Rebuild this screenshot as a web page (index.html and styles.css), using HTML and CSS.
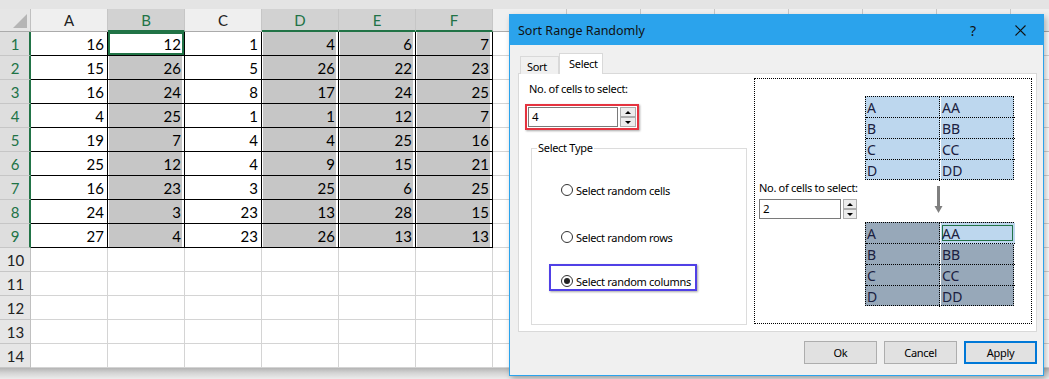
FILE: index.html
```html
<!DOCTYPE html>
<html>
<head>
<meta charset="utf-8">
<title>Sort Range Randomly</title>
<link rel="stylesheet" href="styles.css">
</head>
<body>
<div class="screen">
  <div class="topstrip"></div>
  <div class="sheet">
    <div class="corner"></div>
    <div class="ch">A</div><div class="ch sel">B</div><div class="ch">C</div><div class="ch sel">D</div><div class="ch sel">E</div><div class="ch sel">F</div><div class="ch fillh"></div>

    <div class="rh s">1</div><div class="c">16</div><div class="c g act">12</div><div class="c">1</div><div class="c g">4</div><div class="c g">6</div><div class="c g">7</div><div class="fill"></div>
    <div class="rh s">2</div><div class="c">15</div><div class="c g">26</div><div class="c">5</div><div class="c g">26</div><div class="c g">22</div><div class="c g">23</div><div class="fill"></div>
    <div class="rh s">3</div><div class="c">16</div><div class="c g">24</div><div class="c">8</div><div class="c g">17</div><div class="c g">24</div><div class="c g">25</div><div class="fill"></div>
    <div class="rh s">4</div><div class="c">4</div><div class="c g">25</div><div class="c">1</div><div class="c g">1</div><div class="c g">12</div><div class="c g">7</div><div class="fill"></div>
    <div class="rh s">5</div><div class="c">19</div><div class="c g">7</div><div class="c">4</div><div class="c g">4</div><div class="c g">25</div><div class="c g">16</div><div class="fill"></div>
    <div class="rh s">6</div><div class="c">25</div><div class="c g">12</div><div class="c">4</div><div class="c g">9</div><div class="c g">15</div><div class="c g">21</div><div class="fill"></div>
    <div class="rh s">7</div><div class="c">16</div><div class="c g">23</div><div class="c">3</div><div class="c g">25</div><div class="c g">6</div><div class="c g">25</div><div class="fill"></div>
    <div class="rh s">8</div><div class="c">24</div><div class="c g">3</div><div class="c">23</div><div class="c g">13</div><div class="c g">28</div><div class="c g">15</div><div class="fill"></div>
    <div class="rh s">9</div><div class="c">27</div><div class="c g">4</div><div class="c">23</div><div class="c g">26</div><div class="c g">13</div><div class="c g">13</div><div class="fill"></div>

    <div class="rh">10</div><div class="e"></div><div class="e"></div><div class="e"></div><div class="e"></div><div class="e"></div><div class="e"></div><div class="fill"></div>
    <div class="rh">11</div><div class="e"></div><div class="e"></div><div class="e"></div><div class="e"></div><div class="e"></div><div class="e"></div><div class="fill"></div>
    <div class="rh">12</div><div class="e"></div><div class="e"></div><div class="e"></div><div class="e"></div><div class="e"></div><div class="e"></div><div class="fill"></div>
    <div class="rh">13</div><div class="e"></div><div class="e"></div><div class="e"></div><div class="e"></div><div class="e"></div><div class="e"></div><div class="fill"></div>
    <div class="rh">14</div><div class="e"></div><div class="e"></div><div class="e"></div><div class="e"></div><div class="e"></div><div class="e"></div><div class="fill"></div>
  </div>
  <div class="bottomshade"></div>

  <div class="dialog">
    <div class="titlebar">
      <span class="title">Sort Range Randomly</span>
      <span class="tbtn help">?</span>
      <span class="tbtn close">
        <svg width="11" height="11" viewBox="0 0 11 11"><path d="M0.5 0.5 L10.5 10.5 M10.5 0.5 L0.5 10.5" stroke="#111" stroke-width="1.1" fill="none"/></svg>
      </span>
    </div>
    <div class="dbody">
      <div class="tabs">
        <div class="tab">Sort</div>
        <div class="tab active">Select</div>
      </div>
      <div class="panel">
        <div class="leftcol">
          <div class="lbl">No. of cells to select:</div>
          <div class="redbox">
            <div class="inp">4</div>
            <div class="spin"><span class="sb up"></span><span class="sb dn"></span></div>
          </div>
          <fieldset class="group">
            <legend>Select Type</legend>
            <div class="opt first"><span class="radio"></span><span>Select random cells</span></div>
            <div class="opt second"><span class="radio"></span><span>Select random rows</span></div>
            <div class="focusbox"><div class="opt"><span class="radio on"></span><span>Select random columns</span></div></div>
          </fieldset>
        </div>
        <div class="preview">
          <div class="ptable t1">
            <div class="pc">A</div><div class="pc">AA</div>
            <div class="pc">B</div><div class="pc">BB</div>
            <div class="pc">C</div><div class="pc">CC</div>
            <div class="pc">D</div><div class="pc">DD</div>
          </div>
          <div class="pctrl">
            <div class="plbl">No. of cells to select:</div>
            <div class="prow">
              <div class="pinp">2</div>
              <div class="pspin"><span class="sb up"></span><span class="sb dn"></span></div>
            </div>
          </div>
          <div class="parrow">
            <svg width="149" height="42" viewBox="0 0 149 42"><rect x="72" y="6" width="3" height="21" fill="#7f7f7f"/><path d="M69.5 26 L77.5 26 L73.5 33 Z" fill="#7f7f7f"/></svg>
          </div>
          <div class="ptable t2">
            <div class="pc">A</div><div class="pc hl">AA</div>
            <div class="pc">B</div><div class="pc">BB</div>
            <div class="pc">C</div><div class="pc">CC</div>
            <div class="pc">D</div><div class="pc">DD</div>
          </div>
        </div>
      </div>
      <div class="buttons">
        <div class="btn">Ok</div>
        <div class="btn">Cancel</div>
        <div class="btn primary">Apply</div>
      </div>
    </div>
  </div>
</div>
</body>
</html>
```
FILE: styles.css
```css
* { box-sizing: border-box; margin: 0; padding: 0; }
html, body { width: 1049px; height: 379px; overflow: hidden; background: #fff; }
.screen { position: relative; width: 1049px; height: 379px; overflow: hidden; background: #fff; }

.topstrip { height: 9px; background: #e4e4e4; }

.sheet {
  display: grid;
  grid-template-columns: 31px repeat(6, 77px) 1fr;
  grid-template-rows: 23px repeat(14, 24px);
  font-family: Lato, "Liberation Sans", sans-serif;
  font-size: 15px;
  color: #000;
}
.corner { position: relative; background: #e6e6e6; border-right: 1px solid #c0c0c0; border-bottom: 1px solid #ababab; }
.corner::after {
  content: ""; position: absolute; right: 3px; bottom: 3px; width: 14px; height: 14px;
  background: #b5b5b5; clip-path: polygon(100% 0, 100% 100%, 0 100%);
}
.ch { background: #efefef; border-right: 1px solid #c6c6c6; border-bottom: 1px solid #ababab; display: flex; align-items: center; justify-content: center; color: #222; }
.ch.sel { background: #d2d2d2; color: #217346; border-bottom: 2px solid #217346; }
.ch.fillh { background: repeating-linear-gradient(to right, #efefef 0 73px, #c6c6c6 73px 74px); border-right: none; }
.rh { background: #e6e6e6; border-right: 1px solid #c0c0c0; border-bottom: 1px solid #c6c6c6; display: flex; align-items: center; justify-content: center; color: #222; padding-left: 1px; }
.rh.s { background: #dedede; color: #217346; border-right: 2px solid #217346; }
.c { border-right: 1px solid #000; border-bottom: 1px solid #000; display: flex; align-items: center; justify-content: flex-end; padding-right: 3px; }
.c.g { background: #c6c6c6; box-shadow: inset 1px 0 #fff, inset -2px 0 #fff; }
.c.act { background: #fff; box-shadow: inset 0 0 0 2px #217346; }
.e { border-right: 1px solid #d4d4d4; border-bottom: 1px solid #d4d4d4; }
.fill { border-bottom: 1px solid #d4d4d4; background: repeating-linear-gradient(to right, #fff 0 73px, #d4d4d4 73px 74px); }
.bottomshade { height: 11px; background: linear-gradient(to bottom, #b4b4b4, #d4d4d4 45%, #ececec); }

/* dialog */
.dialog {
  position: absolute; left: 509px; top: 14px; width: 535px; height: 362px;
  border: 1px solid #2ba3ec; background: #f0f0f0;
  font-family: "Noto Sans", sans-serif; font-size: 11px; letter-spacing: -0.3px; color: #000;
  display: flex; flex-direction: column;
  box-shadow: 2px 3px 6px rgba(0,0,0,0.28);
  white-space: nowrap;
}
.titlebar { height: 30px; background: #2ba3ec; display: flex; align-items: center; padding-left: 8px; font-size: 12.5px; letter-spacing: 0; color: #111; }
.title { flex: 1; }
.tbtn { width: 46px; height: 30px; display: flex; align-items: center; justify-content: center; }
.help { font-size: 14px; margin-right: 1px; }

.dbody { flex: 1; padding: 8px 6px 0 8px; display: flex; flex-direction: column; }
.tabs { display: flex; align-items: flex-end; height: 21px; margin-left: 2px; margin-bottom: -1px; position: relative; z-index: 1; }
.tab { height: 18px; width: 39px; border: 1px solid #d9d9d9; border-bottom: none; background: #f0f0f0; padding: 3px 0 0 6px; line-height: 13px; }
.tab.active { height: 21px; width: 44px; background: #fff; padding: 3px 0 0 9px; }

.panel { height: 259px; border: 1px solid #d9d9d9; background: #fff; display: flex; padding-top: 4px; }
.leftcol { width: 235px; display: flex; flex-direction: column; align-items: flex-start; }
.lbl { margin: 4px 0 0 10px; line-height: 14px; }
.redbox {
  margin: 8px 0 0 6px; width: 114px; height: 26px; padding: 1px;
  border: 2px solid #e5333f; box-shadow: 1px 1px 2px rgba(0,0,0,0.35);
  display: flex; gap: 2px;
}
.inp { width: 90px; height: 20px; border: 1px solid #7a7a7a; background: #fff; padding-left: 3px; line-height: 18px; font-size: 11.5px; }
.spin, .pspin { display: flex; flex-direction: column; }
.spin { width: 16px; }
.pspin { width: 14px; }
.sb { flex: 1; height: 10px; background: #ececec; border: 1px solid #adadad; display: flex; align-items: center; justify-content: center; }
.sb::before { content: ""; width: 0; height: 0; border-left: 3px solid transparent; border-right: 3px solid transparent; }
.sb.up::before { border-bottom: 3px solid #000; }
.sb.dn::before { border-top: 3px solid #000; }

.group {
  margin: 11px 0 0 12px; width: 216px; height: 184px;
  border: 1px solid #dcdcdc; padding: 0;
}
.group legend { margin-left: 5px; padding: 0 1px; line-height: 14px; }
.opt { display: flex; align-items: center; height: 16px; gap: 3px; }
.opt.first { margin: 27px 0 0 29px; }
.opt.second { margin: 31px 0 0 29px; }
.focusbox {
  margin: 19px 0 0 17px; width: 148px; height: 27px;
  border: 2px solid #5040e6; box-shadow: 1px 1px 2px rgba(0,0,0,0.35);
  padding: 7px 0 0 10px;
}
.radio { flex: none; width: 12px; height: 12px; border-radius: 50%; border: 1px solid #333; background: #fff; display: flex; align-items: center; justify-content: center; }
.radio.on::before { content: ""; width: 6px; height: 6px; border-radius: 50%; background: #222; }

.preview {
  width: 278px; height: 246px; border: 1px dotted #000;
  display: grid; grid-template-columns: 110px 149px; grid-template-rows: 84px 42px 84px;
  padding-top: 17px;
}
.ptable { grid-column: 2; display: grid; grid-template-columns: 74px 75px; grid-template-rows: repeat(4, 21px); border: 1px dotted #000; font-size: 14px; letter-spacing: 0; color: #1b2040; }
.t1 { grid-row: 1; background: #bdd7ee; }
.t2 { grid-row: 3; background: #97a8b9; }
.pc { border-bottom: 1px dotted #000; padding: 2px 0 0 1px; line-height: 17px; }
.pc:nth-child(odd) { border-right: 1px dotted #000; }
.pc:nth-child(even) { box-shadow: inset 1px 0 #fff; padding-left: 2px; }
.pc:nth-last-child(-n+2) { border-bottom: none; }
.pc.hl { background: #bdd7ee; box-shadow: inset 1px 0 #fff, inset 0 0 0 2px #bdd7ee, inset 0 0 0 3px #217346; }
.pctrl { grid-column: 1; grid-row: 2; padding-left: 4px; }
.plbl { margin-top: 1px; line-height: 14px; white-space: nowrap; }
.prow { display: flex; gap: 2px; margin-top: 4px; height: 20px; }
.pinp { width: 82px; height: 20px; border: 1px solid #7a7a7a; background: #fff; padding-left: 3px; line-height: 18px; font-size: 11.5px; }
.parrow { grid-column: 2; grid-row: 2; }
.parrow svg { display: block; }

.buttons { display: flex; justify-content: flex-end; gap: 7px; margin-top: 9px; }
.btn { width: 73px; height: 23px; background: #e1e1e1; border: 1px solid #adadad; display: flex; align-items: center; justify-content: center; }
.btn.primary { border: 2px solid #0078d7; }
```
